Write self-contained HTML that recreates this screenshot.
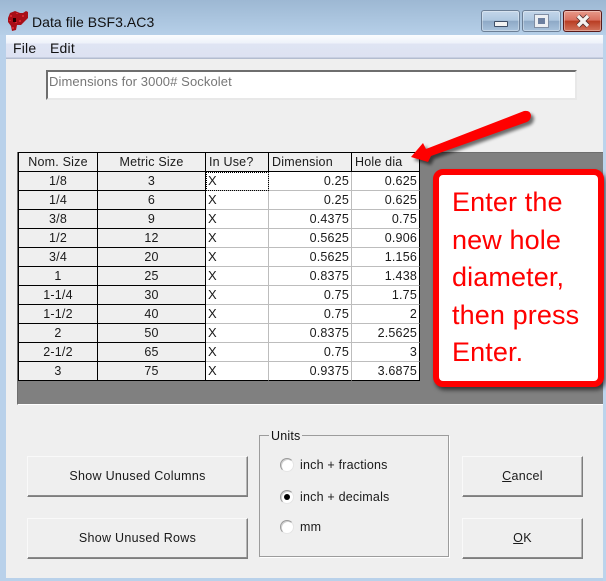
<!DOCTYPE html>
<html><head><meta charset="utf-8"><title>Data file BSF3.AC3</title>
<style>
*{box-sizing:border-box}
html,body{margin:0;padding:0;width:606px;height:581px;overflow:hidden;background:#b9d1ea}
body{position:relative;font-family:"Liberation Sans",sans-serif;font-size:12.5px;color:#111}
.a{position:absolute}
#title{left:0;top:0;width:606px;height:35px;background:linear-gradient(#9db8d3,#b6cfe8)}
#frameR{left:603px;top:35px;width:3px;height:546px;background:#bcd4ec}
#client{left:6px;top:35px;width:597px;height:543px;background:#efefef}
#menu{left:6px;top:35px;width:597px;height:24px;background:linear-gradient(#fbfcfe 0,#eef2fa 8px,#dfe4f3 9px,#dde2f2 22px,#b3bccf 23px,#b3bccf 24px)}
.wb{top:10px;height:22px;border:1px solid #6c7f96;border-radius:3px;background:linear-gradient(#c3d6ea 0,#afc8e0 47%,#8ea9c6 50%,#a8c2dc 100%);box-shadow:inset 0 0 0 1px rgba(255,255,255,.35)}
#tb{left:46px;top:70px;width:531px;height:30px;background:#fff;border:2px solid #e8e8e8;border-top-color:#6e6e6e;border-left-color:#6e6e6e;padding:2px 0 0 1px;color:#777;font-size:13px;letter-spacing:.1px}
#grid{left:17px;top:152px;width:586px;height:253px;background:#808080;border-left:1px solid #6e6e6e;border-top:1px solid #6e6e6e;border-bottom:1px solid #fff}
table{position:absolute;left:18px;top:152px;border-collapse:separate;border-spacing:0;table-layout:fixed;width:402px;background:#fff;border-top:1px solid #000;font-size:12.5px;letter-spacing:.2px;color:#1a1a1a}
td,th{height:19px;padding:0;font-weight:normal;overflow:hidden;white-space:nowrap;line-height:18px}
tr.h td{height:19px;line-height:18px;background:#efefef;border-bottom:1px solid #000}
td.f{background:#efefef;text-align:center;border-right:1px solid #000;border-bottom:1px solid #000;border-left:0}
td.f1{border-left:1px solid #000}
td.x{text-align:left;padding-left:2px;border-right:1px solid #bdbdbd;border-bottom:1px solid #bdbdbd;font-size:13px;letter-spacing:0;line-height:18px}
td.n{text-align:right;padding-right:2px;border-right:1px solid #bdbdbd;border-bottom:1px solid #bdbdbd}
td.l{border-right:1px solid #000}
tr:last-child td{border-bottom:1px solid #000}
.btn{background:#efefef;border:1px solid;border-color:#f9f9f9 #7d7d7d #7d7d7d #f9f9f9;box-shadow:inset 0 -1px 0 #8a8a8a,inset -1px 0 0 #b5b5b5;text-align:center;font-size:12.5px;letter-spacing:.3px;line-height:39px;color:#1a1a1a}
#units{left:259px;top:435px;width:190px;height:122px;border:1px solid #9c9c9c;box-shadow:1px 1px 0 #fff}
#ul{left:269px;top:429px;background:#efefef;padding:0 2px;letter-spacing:.2px}
.r{left:280px;width:14px;height:14px;border-radius:50%;background:#fff;border:1px solid #9a9a9a;border-right-color:#e5e5e5;border-bottom-color:#e5e5e5;box-shadow:inset 1px 1px 0 #d0d0d0}
.rl{left:300px;letter-spacing:.2px;line-height:14px;color:#1a1a1a}
#call{left:433px;top:169px;width:171px;height:218px;border:6px solid #f00;border-radius:10px;background:#fff;box-shadow:2px 3px 4px rgba(0,0,0,.6);color:#f00;font-size:27px;letter-spacing:.12px;line-height:37.5px;padding:9px 0 0 13px;white-space:nowrap}
</style></head><body>
<div class="a" id="title"></div>
<svg class="a" style="left:0;top:0" width="32" height="34" viewBox="0 0 32 34"><path d="M8 18 10 13 15 11 20 13 23 13 26 11 28 12 28 18 24 22 21 25 17 25 16 30 12 31 11 26 8 22Z" fill="#a80f18"/><path d="M10 15h2v2h-2zM16 13h2v1h-2zM22 15h2v2h-2zM19 20h2v2h-2zM12 27h2v2h-2zM9 20h2v1H9zM15 22h2v1h-2z" fill="#d8232d"/><rect x="13" y="18" width="3" height="4" fill="#200"/></svg>
<div class="a" style="left:32px;top:14px;font-size:14px;color:#111;letter-spacing:.05px">Data file BSF3.AC3</div>
<div class="a wb" style="left:481px;width:39px"><div class="a" style="left:12px;top:10px;width:14px;height:6px;background:#f2f2f2;border:1px solid #3d4d66;border-radius:1px"></div></div>
<div class="a wb" style="left:522px;width:39px"><div class="a" style="left:12px;top:4px;width:13px;height:12px;background:#6c7f9f;border:3px solid #eceff3;box-shadow:0 0 0 1px #7f8da3"></div></div>
<div class="a wb" style="left:563px;width:39px;border-color:#5a1a1a;background:linear-gradient(#e79a8a 0,#d9705f 46%,#b93c22 50%,#d2735c 100%)"><svg class="a" style="left:11px;top:3px" width="16" height="14" viewBox="0 0 16 14"><path d="M3 2 13 12M13 2 3 12" stroke="#4a2a2a" stroke-width="5"/><path d="M3 2 13 12M13 2 3 12" stroke="#f4f1ee" stroke-width="3.4"/></svg></div>
<div class="a" id="frameR"></div>
<div class="a" id="client"></div>
<div class="a" id="menu"></div>
<div class="a" style="left:13px;top:40px;font-size:14px;letter-spacing:.2px;color:#111">File</div>
<div class="a" style="left:50px;top:40px;font-size:14px;letter-spacing:.2px;color:#111">Edit</div>
<div class="a" id="tb">Dimensions for 3000# Sockolet</div>
<div class="a" id="grid"></div>
<table>
<colgroup><col style="width:80px"><col style="width:108px"><col style="width:63px"><col style="width:83px"><col style="width:68px"></colgroup>
<tr class="h"><td class="f f1">Nom. Size</td><td class="f">Metric Size</td><td style="border-right:1px solid #000;padding-left:3px">In Use?</td><td style="border-right:1px solid #000;padding-left:3px">Dimension</td><td style="border-right:1px solid #000;padding-left:3px">Hole dia</td></tr>
<tr><td class="f f1">1/8</td><td class="f">3</td><td class="x" style="outline:1px dotted #000;outline-offset:-1px">X</td><td class="n">0.25</td><td class="n l">0.625</td></tr>
<tr><td class="f f1">1/4</td><td class="f">6</td><td class="x">X</td><td class="n">0.25</td><td class="n l">0.625</td></tr>
<tr><td class="f f1">3/8</td><td class="f">9</td><td class="x">X</td><td class="n">0.4375</td><td class="n l">0.75</td></tr>
<tr><td class="f f1">1/2</td><td class="f">12</td><td class="x">X</td><td class="n">0.5625</td><td class="n l">0.906</td></tr>
<tr><td class="f f1">3/4</td><td class="f">20</td><td class="x">X</td><td class="n">0.5625</td><td class="n l">1.156</td></tr>
<tr><td class="f f1">1</td><td class="f">25</td><td class="x">X</td><td class="n">0.8375</td><td class="n l">1.438</td></tr>
<tr><td class="f f1">1-1/4</td><td class="f">30</td><td class="x">X</td><td class="n">0.75</td><td class="n l">1.75</td></tr>
<tr><td class="f f1">1-1/2</td><td class="f">40</td><td class="x">X</td><td class="n">0.75</td><td class="n l">2</td></tr>
<tr><td class="f f1">2</td><td class="f">50</td><td class="x">X</td><td class="n">0.8375</td><td class="n l">2.5625</td></tr>
<tr><td class="f f1">2-1/2</td><td class="f">65</td><td class="x">X</td><td class="n">0.75</td><td class="n l">3</td></tr>
<tr><td class="f f1">3</td><td class="f">75</td><td class="x">X</td><td class="n">0.9375</td><td class="n l">3.6875</td></tr>
</table>
<svg class="a" style="left:400px;top:100px" width="140" height="70" viewBox="0 0 140 70"><g transform="translate(3 3)" opacity=".55" style="filter:blur(1.5px)"><path d="M11 57 23 43 26 49 124 11Q130 10 131 15 131 20 127 22L31 56 28 62Z" fill="#000"/></g><path d="M11 57 23 43 26 49 124 11Q130 10 131 15 131 20 127 22L31 56 28 62Z" fill="#f00"/></svg>
<div class="a" id="call">Enter the<br>new hole<br>diameter,<br>then press<br>Enter.</div>
<div class="a btn" style="left:27px;top:456px;width:221px;height:41px">Show Unused Columns</div>
<div class="a btn" style="left:27px;top:518px;width:221px;height:41px">Show Unused Rows</div>
<div class="a btn" style="left:462px;top:456px;width:121px;height:41px"><u>C</u>ancel</div>
<div class="a btn" style="left:462px;top:518px;width:121px;height:41px"><u>O</u>K</div>
<div class="a" id="units"></div>
<div class="a" id="ul">Units</div>
<div class="a r" style="top:458px"></div><div class="a rl" style="top:458px">inch + fractions</div>
<div class="a r" style="top:490px"><div class="a" style="left:3px;top:3px;width:6px;height:6px;border-radius:50%;background:#000"></div></div><div class="a rl" style="top:490px">inch + decimals</div>
<div class="a r" style="top:520px"></div><div class="a rl" style="top:520px">mm</div>
</body></html>
